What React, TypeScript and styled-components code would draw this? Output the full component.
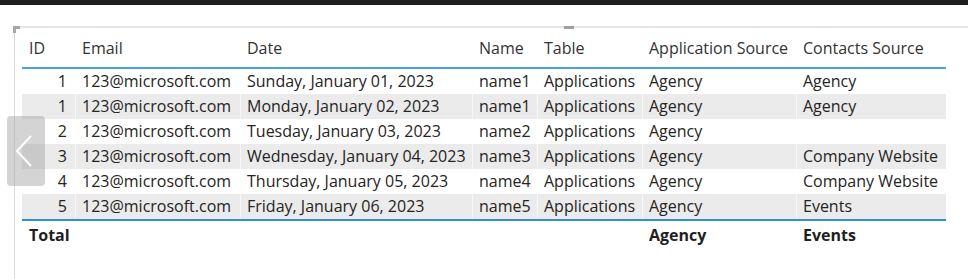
import React from 'react';
import styled, { createGlobalStyle } from 'styled-components';

interface Row {
  id: number;
  email: string;
  date: string;
  name: string;
  table: string;
  appSource: string;
  contactSource: string;
}

const rows: Row[] = [
  { id: 1, email: '123@microsoft.com', date: 'Sunday, January 01, 2023', name: 'name1', table: 'Applications', appSource: 'Agency', contactSource: 'Agency' },
  { id: 1, email: '123@microsoft.com', date: 'Monday, January 02, 2023', name: 'name1', table: 'Applications', appSource: 'Agency', contactSource: 'Agency' },
  { id: 2, email: '123@microsoft.com', date: 'Tuesday, January 03, 2023', name: 'name2', table: 'Applications', appSource: 'Agency', contactSource: '' },
  { id: 3, email: '123@microsoft.com', date: 'Wednesday, January 04, 2023', name: 'name3', table: 'Applications', appSource: 'Agency', contactSource: 'Company Website' },
  { id: 4, email: '123@microsoft.com', date: 'Thursday, January 05, 2023', name: 'name4', table: 'Applications', appSource: 'Agency', contactSource: 'Company Website' },
  { id: 5, email: '123@microsoft.com', date: 'Friday, January 06, 2023', name: 'name5', table: 'Applications', appSource: 'Agency', contactSource: 'Events' },
];

// column widths, x from 22 to 946
const cols = '53px 165px 232px 65px 105px 154px 150px';

const App: React.FC = () => {
  return (
    <>
      <GlobalStyle />
      <TopBar />
      <Canvas>
        <Visual>
          <CornerMark />
          <TopHandle />
          <Table>
            <HeaderRow>
              <HeadCell>ID</HeadCell>
              <HeadCell>Email</HeadCell>
              <HeadCell>Date</HeadCell>
              <HeadCell>Name</HeadCell>
              <HeadCell>Table</HeadCell>
              <HeadCell>Application Source</HeadCell>
              <HeadCell>Contacts Source</HeadCell>
            </HeaderRow>
            {rows.map((r, i) => (
              <BodyRow key={i} $shaded={i % 2 === 1}>
                <Cell $right>{r.id}</Cell>
                <Cell>{r.email}</Cell>
                <Cell>{r.date}</Cell>
                <Cell>{r.name}</Cell>
                <Cell>{r.table}</Cell>
                <Cell>{r.appSource}</Cell>
                <Cell>{r.contactSource}</Cell>
              </BodyRow>
            ))}
            <TotalRow>
              <TotalCell>Total</TotalCell>
              <TotalCell />
              <TotalCell />
              <TotalCell />
              <TotalCell />
              <TotalCell>Agency</TotalCell>
              <TotalCell>Events</TotalCell>
            </TotalRow>
          </Table>
          <NavButton>
            <svg width="18" height="32" viewBox="0 0 18 32" fill="none">
              <path d="M16 1 L2 16 L16 31" stroke="#ffffff" strokeWidth="2" />
            </svg>
          </NavButton>
        </Visual>
      </Canvas>
    </>
  );
};

export default App;

const GlobalStyle = createGlobalStyle`
  html, body {
    margin: 0;
    padding: 0;
    background: #ffffff;
    font-family: 'Open Sans', 'Noto Sans', sans-serif;
    overflow: hidden;
  }
`;

const TopBar = styled.div`
  height: 5px;
  background-color: #1f1f1f;
`;

const Canvas = styled.div`
  padding-top: 21px;
  height: 253px;
`;

const Visual = styled.div`
  position: relative;
  margin-left: 14px;
  height: 100%;
  border-top: 2px solid #e6e6e6;
  border-left: 1px solid #dcdcdc;
  box-sizing: border-box;
`;

const CornerMark = styled.div`
  position: absolute;
  left: -2px;
  top: -2px;
  width: 7px;
  height: 7px;
  border-top: 3px solid #a6a6a6;
  border-left: 3px solid #a6a6a6;
  box-sizing: border-box;
`;

const TopHandle = styled.div`
  position: absolute;
  left: 549px;
  top: -2px;
  width: 10px;
  height: 3px;
  background-color: #a0a0a0;
`;

const Table = styled.div`
  margin-left: 7px;
  width: 924px;
  color: #252423;
  font-size: 16px;
`;

const HeaderRow = styled.div`
  display: grid;
  grid-template-columns: ${cols};
  height: 39px;
  align-items: center;
  border-bottom: 2px solid #4a9fe8;
`;

const HeadCell = styled.div`
  padding-left: 7px;
  white-space: nowrap;
  color: #333333;
`;

const BodyRow = styled.div<{ $shaded: boolean }>`
  display: grid;
  grid-template-columns: ${cols};
  height: 25px;
  background-color: ${p => (p.$shaded ? '#ebebeb' : '#ffffff')};
  & > div + div {
    border-left: 1px solid ${p => (p.$shaded ? '#f7f7f7' : '#ffffff')};
  }
`;

const Cell = styled.div<{ $right?: boolean }>`
  display: flex;
  align-items: center;
  justify-content: ${p => (p.$right ? 'flex-end' : 'flex-start')};
  padding: ${p => (p.$right ? '0 8px 0 0' : '0 0 0 6px')};
  white-space: nowrap;
  line-height: 25px;
`;

const TotalRow = styled.div`
  display: grid;
  grid-template-columns: ${cols};
  height: 28px;
  align-items: center;
  border-top: 2px solid #2f8ee0;
`;

const TotalCell = styled.div`
  padding-left: 7px;
  font-weight: 700;
  color: #1f1f1f;
  white-space: nowrap;
`;

const NavButton = styled.div`
  position: absolute;
  left: -8px;
  top: 88px;
  width: 38px;
  height: 70px;
  border-radius: 4px;
  background-color: rgba(160, 160, 160, 0.45);
  display: flex;
  align-items: center;
  justify-content: center;
  padding-right: 4px;
  box-sizing: border-box;
`;
